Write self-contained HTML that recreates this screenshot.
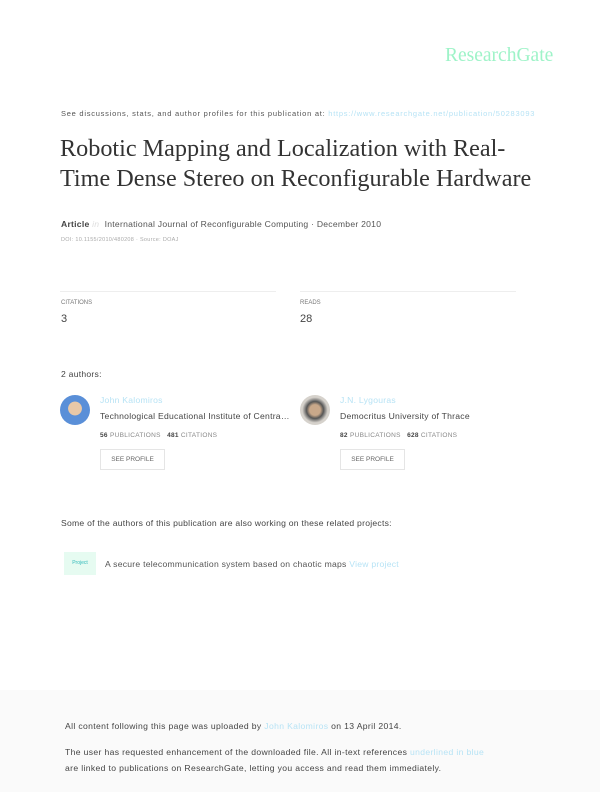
<!DOCTYPE html>
<html><head><meta charset="utf-8"><style>
*{margin:0;padding:0;box-sizing:border-box}
body{width:600px;height:792px;position:relative;background:#fff;font-family:"Liberation Sans",sans-serif;color:#333;overflow:hidden}
.a{position:absolute;white-space:nowrap}
.lk{color:#b7e3f5}
.t{font-size:8.6px;letter-spacing:0.25px;color:#444}
</style></head><body>
<div class="a" style="left:445px;top:45px;font-family:'Liberation Serif',serif;font-size:19.5px;color:#9ef3c8">ResearchGate</div>
<div class="a" style="left:61px;top:109px;font-size:7.5px;letter-spacing:0.75px;color:#555">See discussions, stats, and author profiles for this publication at: <span class="lk">https://www.researchgate.net/publication/50283093</span></div>
<div class="a" style="left:60px;top:134px;font-family:'Liberation Serif',serif;font-size:24.2px;line-height:30px;color:#333">Robotic Mapping and Localization with Real-<br>Time Dense Stereo on Reconfigurable Hardware</div>
<div class="a t" style="left:61px;top:219px;color:#555"><b style="color:#444">Article</b> <i style="color:#ddd">in</i> &nbsp;International Journal of Reconfigurable Computing · December 2010</div>
<div class="a" style="left:61px;top:237px;font-size:5.5px;letter-spacing:0.3px;color:#aaa">DOI: 10.1155/2010/480208 · Source: DOAJ</div>
<div class="a" style="left:60px;top:291px;width:216px;border-top:1px solid #eee"></div>
<div class="a" style="left:300px;top:291px;width:216px;border-top:1px solid #eee"></div>
<div class="a" style="left:61px;top:300px;font-size:6px;color:#777">CITATIONS</div>
<div class="a" style="left:300px;top:300px;font-size:6px;color:#777">READS</div>
<div class="a" style="left:61px;top:313px;font-size:11px;color:#444">3</div>
<div class="a" style="left:300px;top:313px;font-size:11px;color:#444">28</div>
<div class="a t" style="left:61px;top:369px">2 authors:</div>

<div class="a" style="left:60px;top:395px;width:30px;height:30px;border-radius:50%;background:radial-gradient(circle at 50% 45%,#e8c8a8 0 30%,#5a8fd8 32%);"></div>
<div class="a t" style="left:100px;top:395px"><span class="lk">John Kalomiros</span></div>
<div class="a t" style="left:100px;top:411px">Technological Educational Institute of Centra…</div>
<div class="a" style="left:100px;top:432px;font-size:6.5px;letter-spacing:0.3px;color:#888"><b style="color:#444">56</b> PUBLICATIONS &nbsp; <b style="color:#444">481</b> CITATIONS</div>
<div class="a" style="left:100px;top:449px;width:65px;height:21px;border:1px solid #e5e5e5;font-size:6.5px;color:#666;text-align:center;line-height:19px">SEE PROFILE</div>

<div class="a" style="left:300px;top:395px;width:30px;height:30px;border-radius:50%;background:radial-gradient(circle at 50% 50%,#c9a88a 0 25%,#555 40%,#d6d2cc 60%);"></div>
<div class="a t" style="left:340px;top:395px"><span class="lk">J.N. Lygouras</span></div>
<div class="a t" style="left:340px;top:411px">Democritus University of Thrace</div>
<div class="a" style="left:340px;top:432px;font-size:6.5px;letter-spacing:0.3px;color:#888"><b style="color:#444">82</b> PUBLICATIONS &nbsp; <b style="color:#444">628</b> CITATIONS</div>
<div class="a" style="left:340px;top:449px;width:65px;height:21px;border:1px solid #e5e5e5;font-size:6.5px;color:#666;text-align:center;line-height:19px">SEE PROFILE</div>

<div class="a t" style="left:61px;top:518px">Some of the authors of this publication are also working on these related projects:</div>
<div class="a" style="left:64px;top:552px;width:32px;height:23px;background:#e6fbf1;font-size:5px;color:#3bb;text-align:center;line-height:23px">Project</div>
<div class="a t" style="left:105px;top:559px;color:#555">A secure telecommunication system based on chaotic maps <span class="lk">View project</span></div>

<div class="a" style="left:0;top:690px;width:600px;height:102px;background:#fafafa"></div>
<div class="a t" style="left:65px;top:721px;letter-spacing:0.35px">All content following this page was uploaded by <span class="lk">John Kalomiros</span> on 13 April 2014.</div>
<div class="a t" style="left:65px;top:744px;line-height:16px;letter-spacing:0.35px">The user has requested enhancement of the downloaded file. All in-text references <span class="lk">underlined in blue</span><br>are linked to publications on ResearchGate, letting you access and read them immediately.</div>
</body></html>
